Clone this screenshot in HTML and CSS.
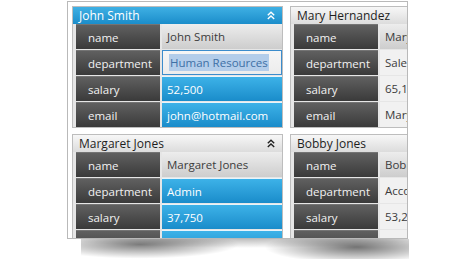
FILE: index.html
```html
<!DOCTYPE html>
<html>
<head>
<meta charset="utf-8">
<link rel="stylesheet" href="styles.css">
</head>
<body>
<div class="stage">
  <div class="frame">
    <div class="cards">
      <div class="card">
        <div class="card-head active">
          <span class="title">John Smith</span>
          <svg class="chev" width="8" height="9" viewBox="0 0 8 9"><polyline points="0.8,4.2 4,1.2 7.2,4.2" /><polyline points="0.8,8 4,5 7.2,8" /></svg>
        </div>
        <div class="rows">
          <div class="label">name</div><div class="value gray">John Smith</div>
          <div class="label">department</div><div class="value edit"><span class="sel">Human Resources</span></div>
          <div class="label">salary</div><div class="value blue">52,500</div>
          <div class="label">email</div><div class="value blue">john@hotmail.com</div>
        </div>
      </div>
      <div class="card">
        <div class="card-head">
          <span class="title">Mary Hernandez</span>
        </div>
        <div class="rows">
          <div class="label">name</div><div class="value gray">Mary Hernandez</div>
          <div class="label">department</div><div class="value light">Sales</div>
          <div class="label">salary</div><div class="value light">65,100</div>
          <div class="label">email</div><div class="value light">Mary@hotmail.com</div>
        </div>
      </div>
      <div class="card">
        <div class="card-head">
          <span class="title">Margaret Jones</span>
          <svg class="chev dark" width="8" height="9" viewBox="0 0 8 9"><polyline points="0.8,4.2 4,1.2 7.2,4.2" /><polyline points="0.8,8 4,5 7.2,8" /></svg>
        </div>
        <div class="rows">
          <div class="label">name</div><div class="value gray">Margaret Jones</div>
          <div class="label">department</div><div class="value blue">Admin</div>
          <div class="label">salary</div><div class="value blue">37,750</div>
          <div class="label">email</div><div class="value blue">margaret@hotmail.com</div>
        </div>
      </div>
      <div class="card">
        <div class="card-head">
          <span class="title">Bobby Jones</span>
        </div>
        <div class="rows">
          <div class="label">name</div><div class="value gray">Bobby Jones</div>
          <div class="label">department</div><div class="value light">Accounting</div>
          <div class="label">salary</div><div class="value light">53,250</div>
          <div class="label">email</div><div class="value light">bobby@hotmail.com</div>
        </div>
      </div>
    </div>
  </div>
  <div class="shadow"></div>
</div>
</body>
</html>
```
FILE: styles.css
```css
html {
  background: #ffffff;
}
html, body {
  margin: 0;
  padding: 0;
}
body {
  font-family: "Open Sans", "Noto Sans", sans-serif;
  font-size: 11.5px;
}
.stage {
  padding: 1px 0 0 67px;
}
.frame {
  box-sizing: border-box;
  width: 341px;
  height: 238px;
  border: 1px solid #b9b9b9;
  background: #ffffff;
}
.shadow {
  margin-left: 14px;
  width: 328px;
  height: 20px;
  background:
    radial-gradient(ellipse 30% 70% at 18% 28%, rgba(0, 0, 0, 0.5), rgba(0, 0, 0, 0) 100%),
    radial-gradient(ellipse 28% 80% at 84% 40%, rgba(0, 0, 0, 0.55), rgba(0, 0, 0, 0) 100%),
    radial-gradient(ellipse 55% 45% at 50% 0%, rgba(0, 0, 0, 0.25), rgba(0, 0, 0, 0) 100%);
}
.cards {
  width: 100%;
  height: 100%;
  box-sizing: border-box;
  padding: 4px 0 0 4px;
  overflow: hidden;
  display: grid;
  grid-template-columns: 211px 211px;
  grid-template-rows: 122px 122px;
  column-gap: 7px;
  row-gap: 6px;
}
.card {
  box-sizing: border-box;
  border: 1px solid #bdbdbd;
  background: #e6e6e6;
  display: flex;
  flex-direction: column;
}
.card-head {
  height: 17px;
  display: flex;
  align-items: center;
  padding: 0 7px 0 6px;
  background: linear-gradient(#f7f7f7, #dcdcdc);
  color: #1e1e1e;
  font-size: 12px;
  white-space: nowrap;
}
.card-head.active {
  background: linear-gradient(#3fb0e4, #1b8dca);
  color: #ffffff;
}
.title {
  flex: 1;
}
.chev {
  fill: none;
  stroke: #ffffff;
  stroke-width: 1.4;
}
.chev.dark {
  stroke: #222222;
}
.rows {
  display: grid;
  grid-template-columns: 84px 120px;
  grid-auto-rows: 25px;
  column-gap: 2px;
  row-gap: 1px;
  padding: 0 0 0 3px;
}
.label,
.value {
  display: flex;
  align-items: center;
  white-space: nowrap;
  overflow: hidden;
}
.label {
  padding-left: 12px;
  color: #f2f2f2;
  background: linear-gradient(#606060, #3a3a3a);
  border-top: 1px solid #747474;
  box-sizing: border-box;
}
.value {
  padding-left: 5px;
  color: #3c3c3c;
}
.value.gray {
  background: linear-gradient(#ededed, #cdcdcd);
}
.value.light {
  background: #f1f1f1;
}
.value.blue {
  background: linear-gradient(#3db2e8, #1a8cca);
  color: #ffffff;
  border-top: 1px solid #e8f4fb;
  box-sizing: border-box;
}
.value.edit {
  box-sizing: border-box;
  border: 1px solid #3b8ccc;
  background: linear-gradient(#f6f6f6, #ececec);
  padding-left: 6px;
}
.sel {
  background: #b3cdea;
  color: #3e70a6;
  padding: 1px 1px;
}
```
